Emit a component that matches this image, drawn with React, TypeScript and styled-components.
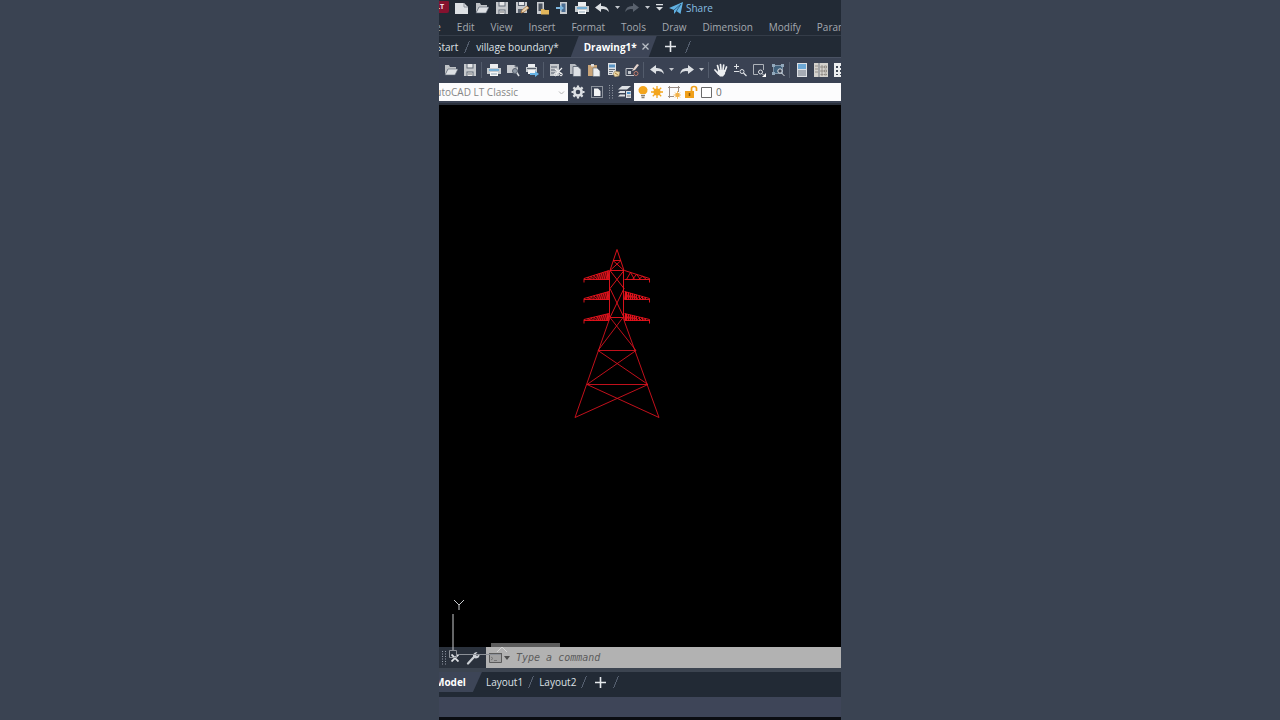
import React from "react";
import styled, { createGlobalStyle } from "styled-components";

const GlobalStyle = createGlobalStyle`
  * { box-sizing: border-box; }
  body { margin: 0; background: #3a4352; }
  button, select, input { font: inherit; color: inherit; margin: 0; padding: 0; border: 0; background: none; }
`;

const Stage = styled.div`
  display: grid;
  grid-template-columns: 439fr 402fr 439fr;
  min-height: 100vh;
  background: #3a4352;
  font-family: "Open Sans", "Noto Sans", sans-serif;
  font-size: 10px;
  line-height: 14px;
`;

const Window = styled.main`
  grid-column: 2;
  min-width: 0;
  display: flex;
  flex-direction: column;
  overflow: hidden;
  background: #222a35;
  border-bottom: 3px solid #0b0d12;
`;

const QuickBar = styled.header`
  display: flex;
  align-items: center;
  height: 15px;
  overflow: hidden;
`;

const Logo = styled.button`
  flex: none;
  width: 10px;
  height: 12px;
  margin: 0 3px 2px 0;
  background: #85122f;
  color: #f3dfe4;
  font-size: 7px;
  font-weight: 700;
  line-height: 12px;
  text-align: left;
  direction: rtl;
  padding-right: 5px;
  border-radius: 0 1px 2px 0;
`;

const IconButton = styled.button<{ $w?: number }>`
  flex: none;
  width: ${(p) => p.$w ?? 20}px;
  height: 16px;
  display: flex;
  align-items: center;
  justify-content: center;
  svg { display: block; flex: none; }
`;

const Share = styled.button`
  display: flex;
  align-items: center;
  gap: 3px;
  margin-left: 3px;
  color: #86bfe2;
  white-space: nowrap;
`;

const MenuBar = styled.nav`
  display: flex;
  align-items: center;
  gap: 16px;
  height: 21px;
  padding-top: 4px;
  border-bottom: 1px solid #343c48;
  overflow: hidden;
  color: #a4a9b0;
`;

const MenuItem = styled.button<{ $cut?: boolean }>`
  flex: none;
  margin-left: ${(p) => (p.$cut ? -14 : 0)}px;
`;

const TabStrip = styled.div<{ $h: number; $pad?: number }>`
  display: flex;
  align-items: center;
  height: ${(p) => p.$h}px;
  padding-bottom: ${(p) => p.$pad ?? 0}px;
  overflow: hidden;
  color: #dde1e6;
`;

const Tab = styled.button<{ $cut?: number }>`
  flex: none;
  white-space: nowrap;
  margin-left: ${(p) => (p.$cut ? -p.$cut : 0)}px;
`;

const Slash = styled.i<{ $w?: number }>`
  flex: none;
  width: ${(p) => p.$w ?? 18}px;
  height: 12px;
  background: linear-gradient(112deg, transparent 47%, #566070 48%, #566070 52%, transparent 53%);
`;

const ActiveTab = styled.div`
  flex: none;
  display: flex;
  align-items: center;
  gap: 5px;
  align-self: stretch;
  margin: 0 6px 0 12px;
  padding: 0 8px 0 13px;
  background: #3d4557;
  color: #fff;
  font-weight: 700;
  clip-path: polygon(8px 0, 100% 0, calc(100% - 8px) 100%, 0 100%);
`;

const ModelTab = styled(ActiveTab)`
  margin: 0;
  padding: 0 16px 0 0;
  clip-path: polygon(0 0, 100% 0, calc(100% - 9px) 100%, 0 100%);
`;

const ToolRow = styled.div<{ $h: number }>`
  display: flex;
  align-items: center;
  height: ${(p) => p.$h}px;
  overflow: hidden;
  background: #3a4253;
`;

const StandardRow = styled(ToolRow)`
  padding-left: 2px;
  border-top: 1px solid #4a5263;
`;

const Divider = styled.i`
  flex: none;
  width: 1px;
  height: 16px;
  margin: 0 2px;
  background: #535c6c;
`;

const Workspace = styled.label`
  flex: none;
  width: 129px;
  height: 18px;
  display: flex;
  align-items: center;
  overflow: hidden;
  background: #fcfcfd;
  color: #868686;
  padding-right: 3px;
  svg { flex: none; }
`;

const PlainSelect = styled.select`
  appearance: none;
  flex: 1;
  min-width: 0;
  height: 18px;
  outline: 0;
`;

const WorkspaceSelect = styled(PlainSelect)`
  margin-left: -10px;
`;

const LayerBox = styled.label`
  flex: 1;
  min-width: 0;
  height: 18px;
  display: flex;
  align-items: center;
  background: #fcfcfd;
  color: #6d6d6d;
  padding-left: 2px;
  svg { flex: none; }
`;

const Canvas = styled.section`
  position: relative;
  flex: 1;
  min-height: 320px;
  background: #000;
  border-top: 2px solid #2a303b;
`;

const Drawing = styled.svg`
  position: absolute;
  inset: 0;
  width: 100%;
  height: 100%;
`;

const Ucs = styled.svg`
  position: absolute;
  left: 10px;
  bottom: -12px;
  z-index: 2;
  pointer-events: none;
`;

const History = styled.div`
  position: absolute;
  left: 52px;
  bottom: 0;
  width: 69px;
  height: 4px;
  background: #5c5c5c;
`;

const CommandBar = styled.form`
  display: flex;
  align-items: center;
  height: 25px;
  background: #2a313c;
  border-bottom: 4px solid #3c4450;
`;

const CommandField = styled.label`
  flex: 1;
  min-width: 0;
  align-self: stretch;
  display: flex;
  align-items: center;
  gap: 5px;
  margin-left: 1px;
  padding-left: 3px;
  background: #b2b2b2;
  svg { flex: none; }
`;

const CommandInput = styled.input`
  flex: 1;
  min-width: 0;
  font-family: "DejaVu Sans Mono", monospace;
  font-style: italic;
  outline: 0;
  &::placeholder { color: #5c5c5c; opacity: 1; }
`;

const StatusBar = styled.footer`
  height: 20px;
  background: #3e4558;
`;

const W = "#dde0e4";
const B = "#7db7e0";

const Svg = ({ s = 14, w, children }: { s?: number; w?: number; children: React.ReactNode }) => (
  <svg width={w ?? s} height={s} viewBox={`0 0 ${w ?? s} ${s}`} fill="none" aria-hidden="true">
    {children}
  </svg>
);

const NewIcon = () => (
  <Svg><path d="M0 2h9l4 4v7H0z" fill={W} /><path d="M9 2v4h4" stroke="#8e949d" /></Svg>
);
const OpenIcon = () => (
  <Svg>
    <path d="M1 12V2h4l1 2h6v2H4z" fill="#bfc2c6" />
    <path d="M4 6h10l-3 6H1z" fill={W} stroke="#59616e" strokeWidth=".6" />
  </Svg>
);
const SaveIcon = ({ c = "#c5c8cc" }: { c?: string }) => (
  <Svg>
    <path d="M1 1h12v12H1z" fill={c} />
    <path d="M3.5 1h7v4.500h-7zM3.500 8.500h7V13h-7z" fill="#626a76" />
    <path d="M4.500 1h5v3.500h-5zM4.500 9.500h5V13h-5z" fill="#e6e7e9" />
    <path d="M5 11h4" stroke="#777" />
  </Svg>
);
const SaveAsIcon = () => (
  <Svg>
    <path d="M1 1h11v11H1z" fill="#c5c8cc" />
    <path d="M3 1h7v4H3zM3 8h6v4H3z" fill="#5c6470" />
    <path d="M4 1h5v3H4z" fill="#e6e7e9" />
    <path d="M6 12l1-3 5-4 2 2-5 4z" fill="#e7d2b0" stroke="#a56c34" strokeWidth=".7" />
  </Svg>
);
const MobileIcon = () => (
  <Svg>
    <path d="M2 1h7v12H2z" fill="#c9ccd0" /><path d="M3.500 2.500h4V10h-4z" fill="#4b535f" />
    <path d="M6 8h3l1 1h4v4.500H6z" fill="#e2b65c" />
  </Svg>
);
const ImportIcon = () => (
  <Svg>
    <path d="M5 1h7v12H5z" fill="#c9ccd0" /><path d="M6.500 2.500h4V11h-4z" fill="#4b6d92" />
    <path d="M1 6h4V4l4 3-4 3V8H1z" fill={B} />
  </Svg>
);
const PrintIcon = () => (
  <Svg>
    <path d="M3 1h8v4H3z" fill="#eceef0" /><path d="M0 5h14v6H0z" fill="#c5cace" />
    <path d="M2 6h10v2H2z" fill="#75aed4" /><path d="M3 9h8v4H3z" fill="#f5f6f7" />
    <path d="M4 11h6" stroke="#8fa5b5" />
  </Svg>
);
const PreviewIcon = () => (
  <Svg>
    <path d="M1 2h8v2h3v6H1z" fill="#c7cacf" /><path d="M9 2v2h3" stroke="#7c838e" />
    <circle cx="9" cy="8" r="2.500" fill="#8e98a4" stroke="#59616e" /><path d="M11 10l2 3" stroke={W} strokeWidth="1.500" />
  </Svg>
);
const PublishIcon = () => (
  <Svg>
    <path d="M3 1h7v3H3z" fill="#eceef0" /><path d="M1 4h11v5H1z" fill="#c5cace" />
    <path d="M2 5h9v1H2z" fill="#59616e" /><path d="M3 7h7v4H3z" fill="#f5f6f7" />
    <path d="M5 10h5V8l4 3-4 3v-2H5z" fill="#67b3e5" />
  </Svg>
);
const CutIcon = () => (
  <Svg>
    <path d="M1 1h9v12H1z" fill="#c5c8cc" /><path d="M2 4h6M2 7h5M2 10h4" stroke="#59616e" />
    <path d="M6 6l7 5M13 5l-6 6" stroke="#f1f1f1" strokeWidth="1.200" />
    <circle cx="6.500" cy="11.500" r="1.300" stroke="#f1f1f1" /><circle cx="12" cy="11.500" r="1.300" stroke="#f1f1f1" />
  </Svg>
);
const CopyIcon = () => (
  <Svg>
    <path d="M2 1h5l2 2v8H2z" fill="#b7bbc1" />
    <path d="M5 3.500h5l3 3V13.500H5z" fill={W} stroke="#515967" strokeWidth=".8" />
  </Svg>
);
const PasteIcon = () => (
  <Svg>
    <path d="M1 2h9v11H1z" fill="#c9a478" /><path d="M4 1h3v2.500H4z" fill="#ddd" />
    <path d="M6 5h4l3 3v5.500H6z" fill="#eceef0" stroke="#5d6470" strokeWidth=".6" />
  </Svg>
);
const MatchIcon = () => (
  <Svg>
    <path d="M2 0h8v12H2z" fill={W} /><path d="M3 1.500h6v3H3z" fill="#5a95c5" /><path d="M3 6.500h6M3 8.500h4M3 10.500h3" stroke="#68707c" />
    <path d="M7 11l2-3 5 1-1 4-4 1z" fill="#ead6a6" stroke="#8d7b56" strokeWidth=".6" /><path d="M9 10l3 2" stroke="#b0853f" />
  </Svg>
);
const EditBlockIcon = () => (
  <Svg>
    <path d="M8 5.500H1v7h8" stroke="#c3c6cb" /><path d="M3 8h3v3H3z" fill="#c3c6cb" />
    <path d="M7 8l1-2 4-5 2 1-4 5z" fill="#e5d4cc" /><circle cx="11" cy="10.500" r="2" stroke="#c27d6b" />
  </Svg>
);
const UndoIcon = ({ c = W, flip }: { c?: string; flip?: boolean }) => (
  <Svg>
    <g transform={flip ? "translate(14 0) scale(-1 1)" : undefined}>
      <path d="M0 6.500L6 2v3q7-.5 8 6-3-4-8-2.700V11z" fill={c} />
    </g>
  </Svg>
);
const Caret = () => <Svg s={5}><path d="M0 1h5L2.500 4z" fill="#c4c8ce" /></Svg>;
const BarCaret = () => <Svg s={9}><path d="M1 1h7v1.200H1zM1 4h7L4.500 7.500z" fill={W} /></Svg>;
const PlaneIcon = () => (
  <Svg><path d="M0 7L14 1l-2.500 12-4-3L5 13V9z" fill="#61b1e2" /><path d="M5 9l7-6-4.500 7" stroke="#255275" strokeWidth=".8" /></Svg>
);
const HandIcon = () => (
  <Svg>
    <path d="M5 8L3.500 2.500M7 7L6.500 1.500M9 7l.700-5M11 8l1.500-4M4.500 11L1 7" stroke="#eceef0" strokeWidth="1.700" strokeLinecap="round" />
    <path d="M4 7h7.500l-.5 4-2 2.500H6L3 10z" fill="#eceef0" />
  </Svg>
);
const ZoomIcon = () => (
  <Svg>
    <path d="M1 3.500h5M3.500 1v5M1 8.500h5" stroke={W} /><circle cx="9" cy="8.500" r="2" stroke={W} /><path d="M10.500 10l3 3" stroke={W} strokeWidth="1.300" />
  </Svg>
);
const ZoomWindowIcon = () => (
  <Svg>
    <path d="M6 11.500H1.500v-10h10V7" stroke="#aeb3ba" /><circle cx="8.500" cy="9" r="2" stroke={W} /><path d="M10 10.500l1.500 1.500" stroke={W} />
    <path d="M14 10v4h-4z" fill="#fff" />
  </Svg>
);
const ZoomPrevIcon = () => (
  <Svg>
    <path d="M2.500 2.500h9v8h-9z" fill="#41627d" stroke="#7f94a8" /><path d="M1 1h3v3H1zM10 1h3v3h-3zM1 9h3v3H1z" fill="#92a9bc" />
    <circle cx="9" cy="8" r="2.200" fill="#3a4253" stroke={W} /><path d="M10.500 10l3 3" stroke={W} />
  </Svg>
);
const PropertiesIcon = () => (
  <Svg>
    <path d="M2 0h10v14H2z" fill={W} /><path d="M3 1h8v5H3z" fill="#6ca8d6" /><path d="M3 8h8M3 10h8M3 12h8" stroke="#6f7784" />
  </Svg>
);
const DesignCenterIcon = () => (
  <Svg>
    <path d="M0 0h14v14H0z" fill="#d4d2cd" /><path d="M5 0v14" stroke="#717780" />
    <path d="M1 3h3M1 6h3M1 9h3M7 3h2v2H7zM10.500 3h2v2h-2zM7 7h2v2H7zM10.500 7h2v2h-2zM7 11h2v1H7zM10.500 11h2v1h-2z" stroke="#7d7770" strokeWidth=".7" />
  </Svg>
);
const PaletteIcon = () => (
  <Svg>
    <path d="M1 0h13v14H1z" fill="#eceef0" />
    <path d="M3 3h2v2H3zM7 3h2v2H7zM3 7h2v2H3zM7 7h2v2H7zM3 11h2v1H3zM7 11h2v1H7z" fill="#414a58" />
  </Svg>
);
const GearIcon = () => (
  <Svg>
    <circle cx="7" cy="7" r="3.600" stroke={W} strokeWidth="2.600" />
    <path d="M7 .5v2M7 11.500v2M.5 7h2M11.500 7h2M2.400 2.400l1.500 1.500M10.100 10.100l1.500 1.500M11.600 2.400l-1.500 1.500M3.900 10.100l-1.500 1.500" stroke={W} strokeWidth="2.200" />
  </Svg>
);
const WorkspaceIcon = () => (
  <Svg>
    <path d="M1.500 1.500h11v11h-11z" stroke="#dfe2e6" strokeDasharray="1 1" />
    <path d="M4 3.500h4l2.500 2.500v5H4z" fill="#f3f4f5" />
  </Svg>
);
const GripIcon = ({ h = 14 }: { h?: number }) => (
  <Svg s={h} w={6}><path d={`M1.500 0v${h}M4.500 0v${h}`} stroke="#9299a4" strokeDasharray="1 1.500" /></Svg>
);
const LayersIcon = () => (
  <Svg>
    <path d="M0 4.500L4 1h9L9 4.500zM0 8l2-2h7L8 8zM0 11.500l2-2h5v2z" fill={W} />
    <path d="M7.500 5.500h6v8h-6z" fill={W} stroke="#3a4253" /><path d="M9 8h3.500" stroke="#4d91c9" strokeWidth="2" /><path d="M9 11h3.500" stroke="#777" />
  </Svg>
);
const BulbIcon = () => (
  <Svg><path d="M4.500 9Q2 7 2.500 4.500 3.500 1 7 1t4.500 3.500Q12 7 9.500 9z" fill="#f3a51d" /><path d="M5 10.500h4M5.500 12.500h3" stroke="#8a8172" strokeWidth="1.300" /></Svg>
);
const SunIcon = () => (
  <Svg>
    <circle cx="7" cy="7" r="3.500" fill="#f3a51d" />
    <path d="M7 1v12M1 7h12M2.800 2.800l8.400 8.400M11.200 2.800l-8.400 8.400" stroke="#f3a51d" strokeWidth="1.300" />
  </Svg>
);
const ViewportIcon = () => (
  <Svg>
    <path d="M2.500 1v12M1 2.500h12M11.500 1v6M1 11.500h6" stroke="#9b8f88" />
    <circle cx="10.500" cy="10" r="2.200" fill="#f3b34a" /><path d="M10.500 6v8M6.500 10H14M8 7.500l5 5M13 7.500l-5 5" stroke="#f3b34a" strokeWidth=".8" />
  </Svg>
);
const LockIcon = () => (
  <Svg><path d="M1 6h9v7H1z" fill="#f0a01a" /><path d="M7.500 6V3.500q0-2 2.500-2t2.500 2V6" stroke="#f0a01a" strokeWidth="1.700" /><path d="M5.500 8v3" stroke="#8b5a0a" strokeWidth="1.500" /></Svg>
);
const SwatchIcon = () => <Svg><path d="M1.500 2.500h10v10h-10z" fill="#fff" stroke="#6b6b6b" /></Svg>;
const ChevronIcon = () => <Svg s={7}><path d="M1 2.500L3.500 5 6 2.500" stroke="#b5b5b5" /></Svg>;
const CrossIcon = ({ s = 7, c = "#b9bec6", t = 1.3 }: { s?: number; c?: string; t?: number }) => (
  <Svg s={s}><path d={`M.5 .5l${s - 1} ${s - 1}M${s - 0.5} .5l-${s - 1} ${s - 1}`} stroke={c} strokeWidth={t} /></Svg>
);
const PlusIcon = () => <Svg s={11}><path d="M5.500 0v11M0 5.500h11" stroke="#e6e9ed" strokeWidth="1.600" /></Svg>;
const WrenchIcon = () => (
  <Svg>
    <path d="M2 12.500l6-6.500" stroke="#ccd0d5" strokeWidth="2.200" strokeLinecap="round" />
    <path d="M11.500 1L9.500 3.500l1.500 1.500L13.500 3q.5 4-3.500 4.500Q6.500 7 7 4q1-3 4.500-3z" fill="#ccd0d5" />
  </Svg>
);
const PromptIcon = () => (
  <Svg s={12} w={22}>
    <path d="M.5 1.500h12v9H.5z" fill="#a2a2a2" stroke="#5b5b5b" /><path d="M0 2h13" stroke="#5b5b5b" strokeWidth="2" />
    <path d="M2 5l2 1.500L2 8M5 8.500h3" stroke="#777" /><path d="M15 4h6l-3 4z" fill="#4d4d4d" />
  </Svg>
);

type Tool = [string, React.ReactNode, number?] | "|";

const quickTools: Tool[] = [
  ["New", <NewIcon />], ["Open", <OpenIcon />], ["Save", <SaveIcon />], ["Save As", <SaveAsIcon />],
  ["Open from mobile", <MobileIcon />], ["Save to mobile", <ImportIcon />], ["Plot", <PrintIcon />],
  ["Undo", <UndoIcon />], ["Undo list", <Caret />, 10], ["Redo", <UndoIcon c="#59616d" flip />],
  ["Redo list", <Caret />, 10], ["Customize", <BarCaret />, 14],
];

const standardTools: Tool[] = [
  ["Open", <OpenIcon />], ["Save", <SaveIcon />], "|",
  ["Plot", <PrintIcon />], ["Preview", <PreviewIcon />], ["Publish", <PublishIcon />], "|",
  ["Cut", <CutIcon />], ["Copy", <CopyIcon />], ["Paste", <PasteIcon />], ["Match properties", <MatchIcon />], ["Block editor", <EditBlockIcon />], "|",
  ["Undo", <UndoIcon />, 21], ["Undo list", <Caret />, 9], ["Redo", <UndoIcon flip />, 21], ["Redo list", <Caret />, 9], "|",
  ["Pan", <HandIcon />], ["Zoom", <ZoomIcon />], ["Zoom window", <ZoomWindowIcon />], ["Zoom previous", <ZoomPrevIcon />], "|",
  ["Properties", <PropertiesIcon />], ["Design center", <DesignCenterIcon />], ["Tool palettes", <PaletteIcon />],
];

const menus = ["File", "Edit", "View", "Insert", "Format", "Tools", "Draw", "Dimension", "Modify", "Parametric"];

const Tools = ({ items, slot }: { items: Tool[]; slot: number }) => (
  <>
    {items.map((t, i) =>
      t === "|" ? <Divider key={i} /> : (
        <IconButton key={i} type="button" aria-label={t[0]} $w={t[2] ?? slot}>{t[1]}</IconButton>
      )
    )}
  </>
);

/* One cross-arm: tip, root heights and lattice, mirrored for the right side. */
const Arm = ({ tip, top, dense }: { tip: number; top: number; dense: boolean }) => {
  const base = tip + 1;
  const xs = dense ? [149, 152, 155, 158, 160, 162, 164, 166, 168, 169] : [152, 158, 164];
  const yAt = (x: number) => tip - ((x - 145) / 25) * (tip - top);
  let d = `M145 ${base + 3}V${tip}L170 ${top}M145 ${base}H170`;
  xs.forEach((x, i) => {
    d += dense
      ? `M${x} ${base}V${yAt(x)}L${xs[i + 1] ?? 170} ${base}`
      : `M${x - 4} ${base}L${x} ${yAt(x)}L${x + 4} ${base}`;
  });
  return <path d={d} />;
};

const Tower = () => (
  <g stroke="#ee141e" strokeWidth=".9" fill="none">
    <path d="M171 165L178 144L185 165M174 155H182M174 155L185 165M182 155L171 165M171 165H185" />
    <path d="M170.500 165V212M184.500 165V212M171 165L185 183L171 212M185 165L171 183L185 212M171 212H185" />
    {[[173, 165], [193, 186], [214, 208]].map(([tip, top]) => (
      <g key={tip}>
        <Arm tip={tip} top={top} dense />
        <g transform="translate(355.500 0) scale(-1 1)"><Arm tip={tip} top={top} dense={tip !== 173} /></g>
      </g>
    ))}
    <g stroke="#d6121e">
      <path d="M171 212L136 312M184 212L220 312M159 245H197M148 279H209" />
      <path d="M171 212L197 245L148 279L220 312M184 212L159 245L209 279L136 312" />
    </g>
  </g>
);

export default function App() {
  return (
    <>
      <GlobalStyle />
      <Stage>
        <Window>
          <QuickBar>
            <Logo type="button">LT</Logo>
            <Tools items={quickTools} slot={20} />
            <Share type="button"><PlaneIcon />Share</Share>
          </QuickBar>
          <MenuBar>
            {menus.map((m, i) => <MenuItem key={m} type="button" $cut={i === 0}>{m}</MenuItem>)}
          </MenuBar>
          <TabStrip $h={21}>
            <Tab type="button" $cut={3}>Start</Tab>
            <Slash />
            <Tab type="button">village boundary*</Tab>
            <ActiveTab>
              <Tab type="button">Drawing1*</Tab>
              <IconButton type="button" aria-label="Close drawing" $w={7}><CrossIcon /></IconButton>
            </ActiveTab>
            <IconButton type="button" aria-label="New drawing" $w={16}><PlusIcon /></IconButton>
            <Slash />
          </TabStrip>
          <StandardRow $h={24}>
            <Tools items={standardTools} slot={19} />
          </StandardRow>
          <ToolRow $h={22}>
            <Workspace>
              <WorkspaceSelect aria-label="Workspace" defaultValue="AutoCAD LT Classic">
                <option>AutoCAD LT Classic</option>
              </WorkspaceSelect>
              <ChevronIcon />
            </Workspace>
            <IconButton type="button" aria-label="Workspace settings" $w={19}><GearIcon /></IconButton>
            <IconButton type="button" aria-label="My workspace" $w={19}><WorkspaceIcon /></IconButton>
            <IconButton type="button" aria-label="Move toolbar" $w={10}><GripIcon /></IconButton>
            <IconButton type="button" aria-label="Layer properties" $w={18}><LayersIcon /></IconButton>
            <LayerBox>
              <BulbIcon /><SunIcon />
              <IconButton as="span" $w={20}><ViewportIcon /></IconButton>
              <LockIcon />
              <IconButton as="span" $w={18}><SwatchIcon /></IconButton>
              <PlainSelect aria-label="Layer" defaultValue="0"><option>0</option></PlainSelect>
            </LayerBox>
          </ToolRow>
          <Canvas>
            <Drawing viewBox="0 0 402 541" role="img" aria-label="Transmission tower"><Tower /></Drawing>
            <History />
            <Ucs width="66" height="62" viewBox="0 0 66 62" fill="none" stroke="#c9cbce">
              <path d="M5 3l5 5 5-5M10 8v5" />
              <path d="M4 17v36" />
              <path d="M.5 53.500h7v7h-7zM8 57.500h44" stroke="#8c9097" />
              <path d="M48 55l5-5 5 5" stroke="#d5d5d5" />
            </Ucs>
          </Canvas>
          <CommandBar onSubmit={(e) => e.preventDefault()}>
            <IconButton type="button" aria-label="Move command line" $w={10}><GripIcon /></IconButton>
            <IconButton type="button" aria-label="Close command line" $w={12}><CrossIcon s={8} c="#dfe2e6" t={1.8} /></IconButton>
            <IconButton type="button" aria-label="Customize" $w={24}><WrenchIcon /></IconButton>
            <CommandField>
              <PromptIcon />
              <CommandInput aria-label="Command" placeholder="Type a command" />
            </CommandField>
          </CommandBar>
          <TabStrip $h={25} $pad={5}>
            <ModelTab><Tab type="button" $cut={4}>Model</Tab></ModelTab>
            <Tab type="button" $cut={-4}>Layout1</Tab>
            <Slash $w={16} />
            <Tab type="button">Layout2</Tab>
            <Slash $w={16} />
            <IconButton type="button" aria-label="New layout" $w={16}><PlusIcon /></IconButton>
            <Slash $w={16} />
          </TabStrip>
          <StatusBar />
        </Window>
      </Stage>
    </>
  );
}
